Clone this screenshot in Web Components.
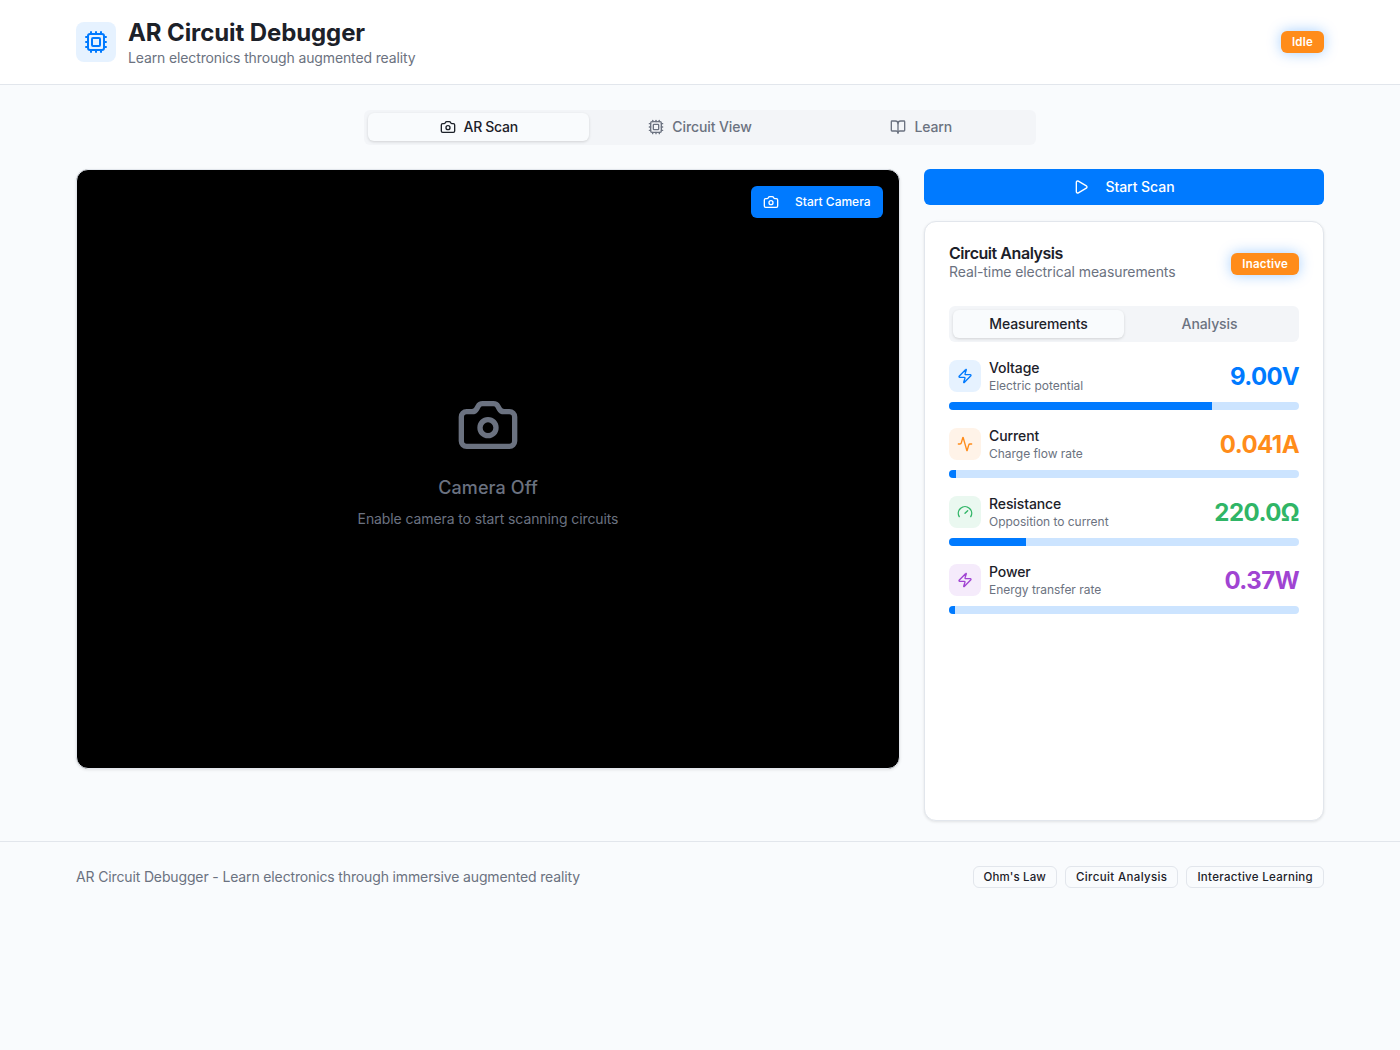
<!DOCTYPE html>
<html lang="en"><head><meta charset="utf-8"><title>AR Circuit Debugger</title>
<style>
html,body{margin:0;padding:0;background:#f9fbfd;}
body{font-family:"Inter","Noto Sans",sans-serif;color:#1c2129;min-height:1050px;-webkit-font-smoothing:antialiased}
main-grid{display:grid;grid-template-columns:824px 400px;gap:24px;width:1248px;margin:24px auto 0}
.side{display:flex;flex-direction:column;gap:16px}
</style></head><body>
<app-header></app-header>
<tab-bar></tab-bar>
<main-grid>
  <camera-panel></camera-panel>
  <div class="side">
    <scan-button></scan-button>
    <analysis-card>
      <metric-row icon="zap" color="#007aff" tint="#e6f2ff" label="Voltage" sub="Electric potential" value="9.00V" pct="75"></metric-row>
      <metric-row icon="activity" color="#ff8c1a" tint="#fff3e8" label="Current" sub="Charge flow rate" value="0.041A" pct="2"></metric-row>
      <metric-row icon="gauge" color="#30b566" tint="#eaf8f0" label="Resistance" sub="Opposition to current" value="220.0Ω" pct="22"></metric-row>
      <metric-row icon="zap" color="#a044d2" tint="#f5ebfb" label="Power" sub="Energy transfer rate" value="0.37W" pct="1.85"></metric-row>
    </analysis-card>
  </div>
</main-grid>
<app-footer></app-footer>
<script>
const ICONS={
camera:'<path d="M13.997 4a2 2 0 0 1 1.76 1.05l.486.9A2 2 0 0 0 18.003 7H20a2 2 0 0 1 2 2v9a2 2 0 0 1-2 2H4a2 2 0 0 1-2-2V9a2 2 0 0 1 2-2h1.997a2 2 0 0 0 1.759-1.048l.489-.904A2 2 0 0 1 10.004 4z"/><circle cx="12" cy="13" r="3"/>',
cpu:'<path d="M12 20v2"/><path d="M12 2v2"/><path d="M17 20v2"/><path d="M17 2v2"/><path d="M2 12h2"/><path d="M2 17h2"/><path d="M2 7h2"/><path d="M20 12h2"/><path d="M20 17h2"/><path d="M20 7h2"/><path d="M7 20v2"/><path d="M7 2v2"/><rect x="4" y="4" width="16" height="16" rx="2"/><rect x="8" y="8" width="8" height="8" rx="1"/>',
book:'<path d="M12 7v14"/><path d="M3 18a1 1 0 0 1-1-1V4a1 1 0 0 1 1-1h5a4 4 0 0 1 4 4 4 4 0 0 1 4-4h5a1 1 0 0 1 1 1v13a1 1 0 0 1-1 1h-6a3 3 0 0 0-3 3 3 3 0 0 0-3-3z"/>',
play:'<path d="M5 5a2 2 0 0 1 3.008-1.728l11.997 6.998a2 2 0 0 1 .003 3.458l-12 7A2 2 0 0 1 5 19z"/>',
zap:'<path d="M4 14a1 1 0 0 1-.78-1.63l9.9-10.2a.5.5 0 0 1 .86.46l-1.92 6.02A1 1 0 0 0 13 10h7a1 1 0 0 1 .78 1.63l-9.9 10.2a.5.5 0 0 1-.86-.46l1.92-6.02A1 1 0 0 0 11 14z"/>',
activity:'<path d="M22 12h-2.48a2 2 0 0 0-1.93 1.46l-2.35 8.36a.25.25 0 0 1-.48 0L9.24 2.18a.25.25 0 0 0-.48 0l-2.35 8.36A2 2 0 0 1 4.49 12H2"/>',
gauge:'<path d="m12 14 4-4"/><path d="M3.34 19a10 10 0 1 1 17.32 0"/>'};
const svg=(n,s,c='currentColor')=>`<svg xmlns="http://www.w3.org/2000/svg" width="${s}" height="${s}" viewBox="0 0 24 24" fill="none" stroke="${c}" stroke-width="2" stroke-linecap="round" stroke-linejoin="round" style="display:block;flex:none">${ICONS[n]}</svg>`;
class Base extends HTMLElement{
  connectedCallback(){ if(!this.shadowRoot){this.attachShadow({mode:'open'}).innerHTML=this.render();} }
}
const def=(n,f)=>customElements.define(n,class extends Base{render(){return f(this)}});
def('status-badge',el=>`<style>:host{display:inline-flex}
 span{display:block;background:#ff8c1a;color:#fff;font:600 11.5px/16px Inter,sans-serif;letter-spacing:.22px;padding:3px 11px;border-radius:6px;box-shadow:0 0 14px rgba(0,122,255,.36)}</style><span><slot></slot></span>`);
def('app-header',()=>`<style>:host{display:block;background:#fff;border-bottom:1px solid #e2e6ec}
 .in{width:1248px;height:84px;margin:0 auto;display:flex;align-items:center;justify-content:space-between}
 .l{display:flex;align-items:center;gap:12px}
 .ic{width:40px;height:40px;border-radius:8px;background:#e6f2ff;display:flex;align-items:center;justify-content:center}
 h1{margin:0;font:700 24px/32px Inter,sans-serif;color:#1c2129;letter-spacing:-.1px}
 p{margin:-1px 0 0;font:400 14px/20px Inter,sans-serif;color:#6b7280;letter-spacing:-.13px}</style>
 <div class="in"><div class="l"><div class="ic">${svg('cpu',24,'#007aff')}</div><div><h1>AR Circuit Debugger</h1><p>Learn electronics through augmented reality</p></div></div>
 <status-badge>Idle</status-badge></div>`);
def('tab-bar',()=>`<style>:host{display:block;width:672px;margin:25px auto 0}
 .l{display:grid;grid-template-columns:repeat(3,1fr);background:#f3f5f8;border-radius:6px;padding:3px 4px 4px;height:28px}
 .t{display:flex;align-items:center;justify-content:center;gap:8px;font:450 14px/20px Inter,sans-serif;color:#6b7280;border-radius:6px;letter-spacing:-.1px}
 .a{background:#f9fbfd;color:#1c2129;box-shadow:0 1px 3px rgba(0,0,0,.14);letter-spacing:-.3px}</style>
 <div class="l"><div class="t a">${svg('camera',16)}AR Scan</div><div class="t">${svg('cpu',16)}Circuit View</div><div class="t">${svg('book',16)}Learn</div></div>`);
def('camera-panel',()=>`<style>:host{display:block;height:600px;position:relative;background:#000;border:1px solid #e2e6ec;border-radius:12px;box-sizing:border-box;overflow:hidden;box-shadow:0 1px 3px rgba(0,0,0,.1)}
 .c{height:100%;display:flex;flex-direction:column;align-items:center;justify-content:center;color:#6b7280;padding-bottom:17px;box-sizing:border-box}
 h3{margin:17px 0 0;font:500 18px/28px Inter,sans-serif;letter-spacing:.1px}
 p{margin:7px 0 0;font:400 14px/20px Inter,sans-serif;letter-spacing:-.1px}
 button{position:absolute;top:16px;right:16px;width:132px;height:32px;border:0;border-radius:6px;background:#007aff;color:#fff;display:flex;align-items:center;padding:0 12px;gap:16px;font:500 12px/16px Inter,sans-serif;box-sizing:border-box}</style>
 <div class="c">${svg('camera',64)}<h3>Camera Off</h3><p>Enable camera to start scanning circuits</p></div>
 <button>${svg('camera',16)}Start Camera</button>`);
def('scan-button',()=>`<style>:host{display:block}
 button{width:100%;height:36px;border:0;border-radius:6px;background:#007aff;color:#fff;display:flex;align-items:center;justify-content:center;gap:16px;font:500 14px/20px Inter,sans-serif;letter-spacing:-.05px}</style>
 <button>${svg('play',16)}Start Scan</button>`);
def('analysis-card',()=>`<style>:host{display:block;height:600px;box-sizing:border-box;background:#fff;border:1px solid #e2e6ec;border-radius:12px;padding:24px;box-shadow:0 1px 3px rgba(0,0,0,.1)}
 .h{display:flex;justify-content:space-between;align-items:center;height:36px}
 .ti{padding-bottom:2px}
 h2{margin:0;font:600 16px/16px Inter,sans-serif;color:#1c2129;letter-spacing:-.45px}
 p{margin:1px 0 0;font:400 14px/20px Inter,sans-serif;color:#6b7280;letter-spacing:-.09px}
 .l{display:grid;grid-template-columns:1fr 1fr;margin-top:24px;background:#f3f5f8;border-radius:6px;padding:4px;height:28px}
 .t{display:flex;align-items:center;justify-content:center;font:450 14px/20px Inter,sans-serif;color:#6b7280;border-radius:6px;letter-spacing:-.1px}
 .a{background:#f9fbfd;color:#1c2129;box-shadow:0 1px 3px rgba(0,0,0,.14)}
 .m{display:flex;flex-direction:column;gap:18px;margin-top:18px}</style>
 <div class="h"><div class="ti"><h2>Circuit Analysis</h2><p>Real-time electrical measurements</p></div><status-badge>Inactive</status-badge></div>
 <div class="l"><div class="t a">Measurements</div><div class="t">Analysis</div></div>
 <div class="m"><slot></slot></div>`);
def('metric-row',el=>{const g=k=>el.getAttribute(k);return `<style>:host{display:block}
 .r{display:flex;align-items:center;height:32px}
 .ic{width:32px;height:32px;border-radius:8px;display:flex;align-items:center;justify-content:center;margin-right:8px;background:${g('tint')}}
 .n{font:450 14px/18px Inter,sans-serif;color:#1c2129;letter-spacing:-.1px}
 .s{font:400 12px/16px Inter,sans-serif;color:#6b7280;letter-spacing:-.03px;margin-top:1px}
 .v{margin-left:auto;font:700 24px/32px Inter,sans-serif;letter-spacing:-.55px;color:${g('color')};position:relative;top:1px}
 .b{height:8px;border-radius:4px;background:#cce4ff;margin-top:10px;overflow:hidden}
 .f{height:100%;background:#007aff;width:${g('pct')}%}</style>
 <div class="r"><div class="ic">${svg(g('icon'),16,g('color'))}</div><div><div class="n">${g('label')}</div><div class="s">${g('sub')}</div></div><div class="v">${g('value')}</div></div>
 <div class="b"><div class="f"></div></div>`});
def('app-footer',()=>`<style>:host{display:block;border-top:1px solid #e2e6ec;margin-top:20px}
 .in{width:1248px;margin:0 auto;height:70px;display:flex;align-items:center;justify-content:space-between}
 p{margin:0;font:400 14px/20px Inter,sans-serif;color:#6b7280;letter-spacing:-.14px}
 .g{display:flex;gap:8px}
 span{font:550 11.5px/16px Inter,sans-serif;color:#1c2129;border:1px solid #e2e6ec;border-radius:6px;padding:2px 10px;letter-spacing:.3px}
 span:nth-child(1){letter-spacing:.14px}
 span:nth-child(2){letter-spacing:.37px}</style>
 <div class="in"><p>AR Circuit Debugger - Learn electronics through immersive augmented reality</p><div class="g"><span>Ohm's Law</span><span>Circuit Analysis</span><span>Interactive Learning</span></div></div>`);
</script></body></html>
